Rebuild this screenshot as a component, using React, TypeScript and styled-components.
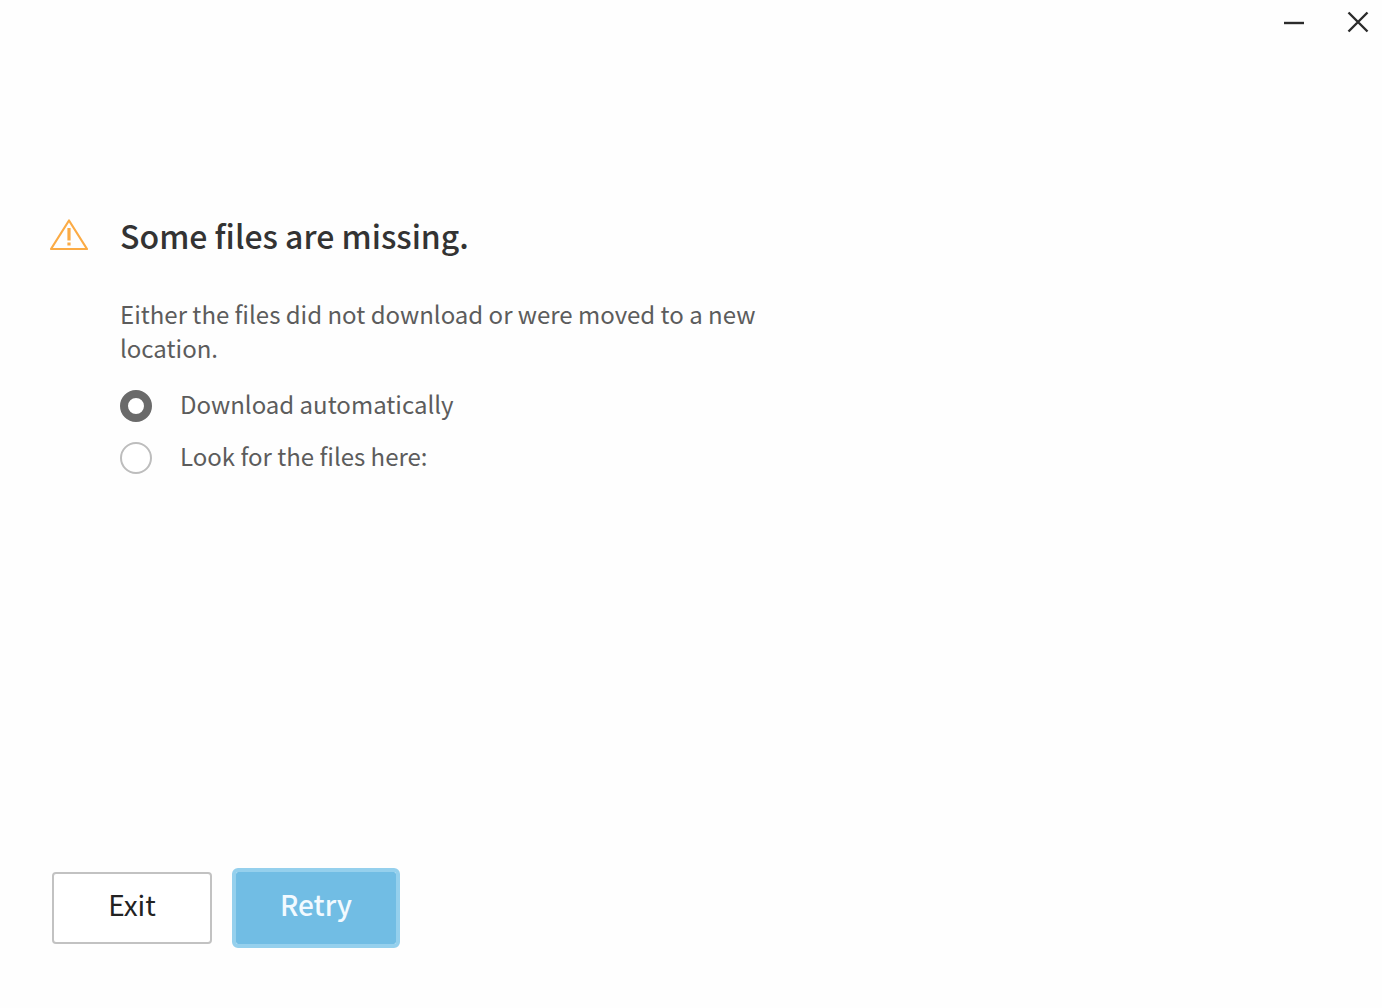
import React, { useState } from "react";
import styled, { createGlobalStyle } from "styled-components";

const GlobalStyle = createGlobalStyle`
  *, *::before, *::after { box-sizing: border-box; }
  body {
    margin: 0;
    background: #fefefe;
    color: #5c5c5c;
    font-family: "Noto Sans CJK SC", "Noto Sans", sans-serif;
  }
`;

const Window = styled.div`
  display: flex;
  flex-direction: column;
  min-height: 100vh;
`;

const TitleBar = styled.header`
  display: flex;
  justify-content: flex-end;
  gap: 32px;
  padding: 6px 8px;
`;

const WindowButton = styled.button`
  display: flex;
  width: 32px;
  height: 32px;
  padding: 0;
  border: 0;
  background: transparent;
  color: #2b2b2b;
`;

const Content = styled.main`
  display: grid;
  grid-template-columns: 40px minmax(0, 660px);
  column-gap: 32px;
  flex: 1;
  align-content: start;
  padding: 167px 48px 32px;
`;

const Heading = styled.h1`
  margin: 0 0 38px;
  color: #333333;
  font-size: 32px;
  font-weight: 500;
  line-height: 48px;
`;

const WarningIcon = styled.svg`
  width: 40px;
  height: 48px;
`;

const Body = styled.div`
  grid-column: 2;
`;

const Message = styled.p`
  margin: 0 0 23px;
  font-size: 24px;
  line-height: 34px;
`;

const Choices = styled.fieldset`
  display: flex;
  flex-direction: column;
  align-items: flex-start;
  gap: 16px;
  margin: 0;
  padding: 0;
  border: 0;
`;

const Choice = styled.label`
  display: flex;
  align-items: center;
  gap: 28px;
  font-size: 24px;
  line-height: 32px;
`;

const ChoiceText = styled.span`
  padding-bottom: 4px;
`;

const Radio = styled.input`
  appearance: none;
  width: 32px;
  height: 32px;
  margin: 0;
  border: 2px solid #bdbdbd;
  border-radius: 50%;
  background: #ffffff;

  &:checked {
    border: 8px solid #6a6a6a;
  }
`;

const Footer = styled.footer`
  display: flex;
  gap: 24px;
  padding: 0 52px 64px;
`;

const ActionButton = styled.button<{ $primary?: boolean }>`
  width: 160px;
  height: 72px;
  padding: 0 0 8px;
  border: ${(p) => (p.$primary ? "0" : "2px solid #c2c2c2")};
  border-radius: ${(p) => (p.$primary ? "2px" : "4px")};
  outline: ${(p) => (p.$primary ? "4px solid #95d0ed" : "none")};
  background: ${(p) => (p.$primary ? "#71bde4" : "#ffffff")};
  color: ${(p) => (p.$primary ? "#f2faff" : "#222222")};
  font-family: inherit;
  font-size: 28px;
  font-weight: ${(p) => (p.$primary ? 500 : 400)};
`;

const choices = [
  { id: "download", label: "Download automatically" },
  { id: "browse", label: "Look for the files here:" },
];

export default function App() {
  const [choice, setChoice] = useState("download");

  return (
    <Window>
      <GlobalStyle />
      <TitleBar>
        <WindowButton type="button" aria-label="Minimize">
          <svg width="32" height="32" viewBox="0 0 32 32" fill="none" stroke="currentColor" strokeWidth="2.4">
            <path d="M6 17H26" />
          </svg>
        </WindowButton>
        <WindowButton type="button" aria-label="Close">
          <svg width="32" height="32" viewBox="0 0 32 32" fill="none" stroke="currentColor" strokeWidth="2.4">
            <path d="M6.5 6.5L25.5 25.5M25.5 6.5L6.5 25.5" />
          </svg>
        </WindowButton>
      </TitleBar>
      <Content>
        <WarningIcon viewBox="0 0 40 48" fill="none" stroke="#fbab45" aria-hidden="true">
          <path d="M21 9.5L39 38H3Z" strokeWidth="2.2" strokeLinejoin="round" />
          <path d="M21 17V29.5M21 31.5V34.5" strokeWidth="3.2" />
        </WarningIcon>
        <Heading>Some files are missing.</Heading>
        <Body>
          <Message>Either the files did not download or were moved to a new location.</Message>
          <Choices aria-label="How to find the missing files">
            {choices.map(({ id, label }) => (
              <Choice key={id}>
                <Radio type="radio" name="source" value={id} checked={choice === id} onChange={() => setChoice(id)} />
                <ChoiceText>{label}</ChoiceText>
              </Choice>
            ))}
          </Choices>
        </Body>
      </Content>
      <Footer>
        <ActionButton type="button">Exit</ActionButton>
        <ActionButton type="button" $primary>Retry</ActionButton>
      </Footer>
    </Window>
  );
}
